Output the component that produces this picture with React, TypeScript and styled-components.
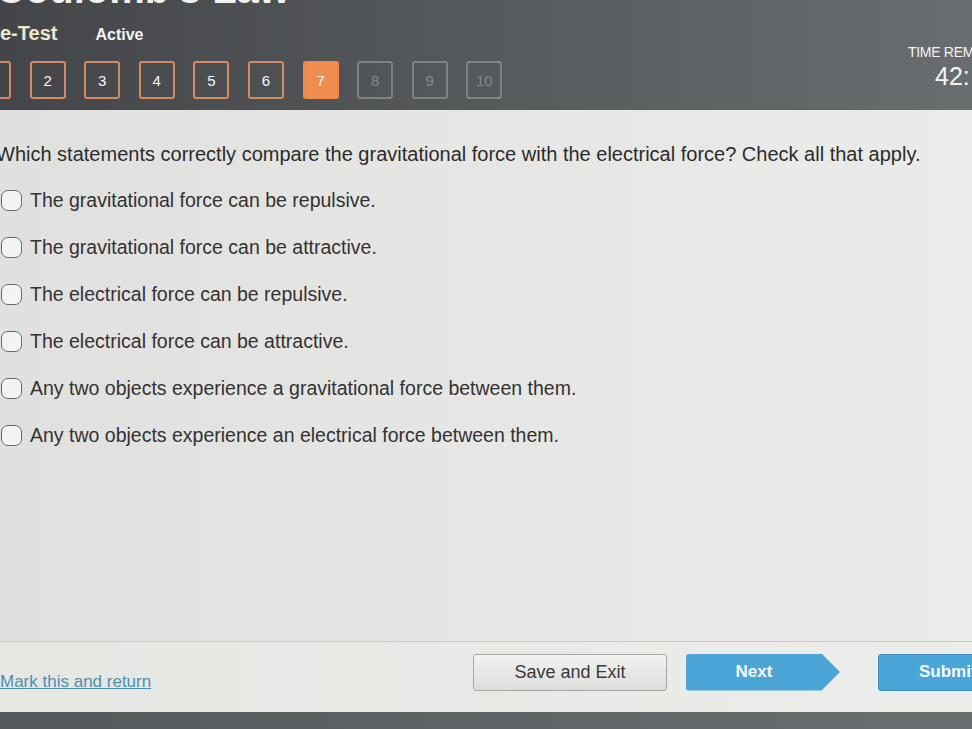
import React from "react";
import styled, { createGlobalStyle } from "styled-components";

const GlobalStyle = createGlobalStyle`
  html, body {
    margin: 0;
    padding: 0;
    overflow: hidden;
    background: #3c3e40;
  }
  body {
    font-family: "Liberation Sans", Arial, sans-serif;
  }
`;

const Page = styled.div`
  display: flex;
  flex-direction: column;
  width: 972px;
  height: 729px;
  overflow: hidden;
`;

const Header = styled.header`
  height: 110px;
  display: flex;
  justify-content: space-between;
  overflow: hidden;
  background: linear-gradient(90deg, #434548 0%, #55585b 45%, #6a6d70 100%);
`;

const HeaderLeft = styled.div`
  display: flex;
  flex-direction: column;
`;

const Title = styled.h1`
  margin: -31px 0 0 -4px;
  height: 40px;
  line-height: 40px;
  font-size: 40px;
  font-weight: 700;
  color: #f2f2ee;
  white-space: nowrap;
`;

const StatusRow = styled.div`
  display: flex;
  align-items: baseline;
  gap: 38px;
  margin-top: 13px;
`;

const TestName = styled.span`
  font-size: 20px;
  font-weight: 700;
  color: #ece8d0;
`;

const Status = styled.span`
  font-size: 16px;
  font-weight: 700;
  color: #f4f4f4;
`;

const QuestionNav = styled.nav`
  display: flex;
  gap: 18.6px;
  margin: 16px 0 0 -25px;
`;

const NavButton = styled.div<{ $state: "done" | "current" | "todo" }>`
  width: 36px;
  height: 38px;
  box-sizing: border-box;
  display: flex;
  align-items: center;
  justify-content: center;
  border-radius: 3px;
  font-size: 15px;
  border: 2px solid
    ${({ $state }) =>
      $state === "done" ? "#d48a62" : $state === "current" ? "#ec8a4c" : "#7f8285"};
  background: ${({ $state }) => ($state === "current" ? "#ee8d4f" : "transparent")};
  color: ${({ $state }) => ($state === "todo" ? "#85888b" : "#f6f6f6")};
`;

const Timer = styled.div`
  width: 64px;
  display: flex;
  flex-direction: column;
  padding-top: 44px;
  color: #f4f4f4;
  white-space: nowrap;
`;

const TimerLabel = styled.span`
  font-size: 14px;
  letter-spacing: -0.3px;
`;

const TimerValue = styled.span`
  font-size: 25px;
  margin: 2px 0 0 27px;
`;

const Main = styled.main`
  flex: 1;
  display: flex;
  flex-direction: column;
  padding: 33px 0 0 0;
  background: linear-gradient(90deg, #e0e0de 0%, #e6e6e4 50%, #ebebe9 100%);
`;

const Question = styled.p`
  margin: 0 0 0 -4px;
  font-size: 20px;
  color: #2c2c2c;
  white-space: nowrap;
`;

const Options = styled.ul`
  list-style: none;
  margin: 23px 0 0 0;
  padding: 0;
  display: flex;
  flex-direction: column;
  gap: 25px;
`;

const Option = styled.li`
  display: flex;
  align-items: center;
  gap: 8px;
  font-size: 19.5px;
  line-height: 22px;
  color: #333;
`;

const Box = styled.span`
  width: 21px;
  height: 21px;
  box-sizing: border-box;
  margin-left: 1px;
  border: 1.5px solid #6a6a6a;
  border-radius: 7px;
  background: #f4f4f2;
`;

const Footer = styled.footer`
  height: 71px;
  box-sizing: border-box;
  padding-bottom: 10px;
  display: flex;
  align-items: center;
  border-top: 1px solid #cacac8;
  background: linear-gradient(90deg, #e6e6e3 0%, #ececea 100%);
`;

const MarkLink = styled.a`
  font-size: 17px;
  color: #4f8fae;
  text-decoration: underline;
  margin-top: 20px;
  width: 473px;
  flex-shrink: 0;
  cursor: pointer;
`;

const Buttons = styled.div`
  display: flex;
  align-items: center;
  gap: 19px;
`;

const GrayButton = styled.button`
  width: 194px;
  height: 37px;
  border: 1px solid #a8a8a6;
  border-radius: 3px;
  background: linear-gradient(#f2f2f0, #dddddb);
  font-family: inherit;
  font-size: 18px;
  color: #3a3a3a;
`;

const NextButton = styled.button`
  width: 154px;
  height: 37px;
  border: none;
  padding: 0 18px 0 0;
  background: #4ba6d7;
  clip-path: polygon(0 0, 88% 0, 100% 50%, 88% 100%, 0 100%);
  border-radius: 3px 0 0 3px;
  font-family: inherit;
  font-size: 17px;
  font-weight: 700;
  color: #f4f9fc;
`;

const SubmitButton = styled.button`
  width: 120px;
  height: 37px;
  margin-left: 19px;
  border: 1px solid #3d8fbf;
  border-radius: 3px;
  background: #4aa6d8;
  font-family: inherit;
  font-size: 17px;
  font-weight: 700;
  color: #f4f9fc;
  text-align: left;
  padding-left: 40px;
  flex-shrink: 0;
`;

const BottomEdge = styled.div`
  height: 17px;
  background: linear-gradient(90deg, #55585a, #6a6e70);
`;

const done = [1, 2, 3, 4, 5, 6];
const todo = [8, 9, 10];

const options = [
  "The gravitational force can be repulsive.",
  "The gravitational force can be attractive.",
  "The electrical force can be repulsive.",
  "The electrical force can be attractive.",
  "Any two objects experience a gravitational force between them.",
  "Any two objects experience an electrical force between them.",
];

export default function App() {
  return (
    <>
      <GlobalStyle />
      <Page>
        <Header>
          <HeaderLeft>
            <Title>Coulomb's Law</Title>
            <StatusRow>
              <TestName>e-Test</TestName>
              <Status>Active</Status>
            </StatusRow>
            <QuestionNav>
              {done.map((n) => (
                <NavButton key={n} $state="done">
                  {n === 1 ? "" : n}
                </NavButton>
              ))}
              <NavButton $state="current">7</NavButton>
              {todo.map((n) => (
                <NavButton key={n} $state="todo">
                  {n}
                </NavButton>
              ))}
            </QuestionNav>
          </HeaderLeft>
          <Timer>
            <TimerLabel>TIME REMAINING</TimerLabel>
            <TimerValue>42:</TimerValue>
          </Timer>
        </Header>
        <Main>
          <Question>
            Which statements correctly compare the gravitational force with the
            electrical force? Check all that apply.
          </Question>
          <Options>
            {options.map((o) => (
              <Option key={o}>
                <Box />
                {o}
              </Option>
            ))}
          </Options>
        </Main>
        <Footer>
          <MarkLink>Mark this and return</MarkLink>
          <Buttons>
            <GrayButton>Save and Exit</GrayButton>
            <NextButton>Next</NextButton>
            <SubmitButton>Submit</SubmitButton>
          </Buttons>
        </Footer>
        <BottomEdge />
      </Page>
    </>
  );
}
